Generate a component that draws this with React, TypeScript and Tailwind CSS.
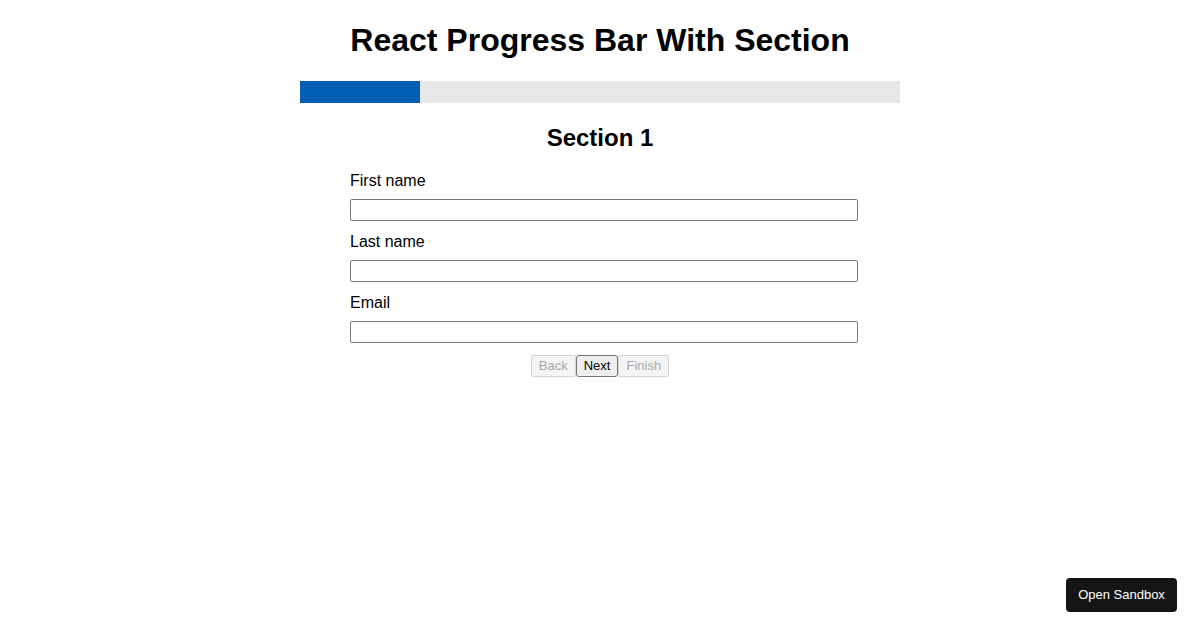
import { useState } from "react";

const sections = [
  { title: "Section 1", fields: ["First name", "Last name", "Email"] },
  { title: "Section 2", fields: ["Address", "City", "Zip"] },
  { title: "Section 3", fields: ["Username", "Password"] },
];

export default function App() {
  const [step] = useState(0);
  const pct = 20;
  const section = sections[step];

  return (
    <div className="relative min-h-[630px] bg-white font-['Liberation_Sans',Arial,sans-serif] text-black">
      <div className="mx-auto flex w-[600px] flex-col items-center pt-[22px]">
        <h1 className="text-[32px] font-bold leading-[36px]">React Progress Bar With Section</h1>

        {/* progress bar */}
        <div className="mt-[23px] h-[22px] w-full bg-[#e8e8e8]">
          <div className="h-full bg-[#035eb6]" style={{ width: `${pct}%` }} />
        </div>

        <h2 className="mt-[21px] text-[24px] font-bold leading-[28px]">{section.title}</h2>

        <form className="ml-[8px] mt-[20px] flex w-[508px] flex-col">
          {section.fields.map((f, i) => (
            <div key={f} className={i > 0 ? "mt-[12px]" : ""}>
              <label className="block text-[16px] leading-[18px]">{f}</label>
              <input
                type="text"
                className="mt-[9px] block h-[22px] w-full rounded-[2px] border border-[#767676] bg-white px-[2px] text-[13px]"
              />
            </div>
          ))}
          <div className="mt-[12px] flex justify-center pr-[8px] text-[13px] leading-[16px]">
            <button
              type="button"
              disabled
              className="h-[22px] rounded-[2px] border border-[#d5d5d5] bg-[#f4f4f4] px-[7px] text-[#a9a9a9]"
            >
              Back
            </button>
            <button
              type="button"
              className="h-[22px] rounded-[3px] border border-[#767676] bg-[#efefef] px-[7px] text-black"
            >
              Next
            </button>
            <button
              type="button"
              disabled
              className="h-[22px] rounded-[2px] border border-[#d5d5d5] bg-[#f4f4f4] px-[7px] text-[#a9a9a9]"
            >
              Finish
            </button>
          </div>
        </form>
      </div>

      <button
        type="button"
        className="absolute bottom-[18px] right-[23px] h-[34px] w-[111px] rounded-[4px] bg-[#151515] text-[13px] text-white"
      >
        Open Sandbox
      </button>
    </div>
  );
}
